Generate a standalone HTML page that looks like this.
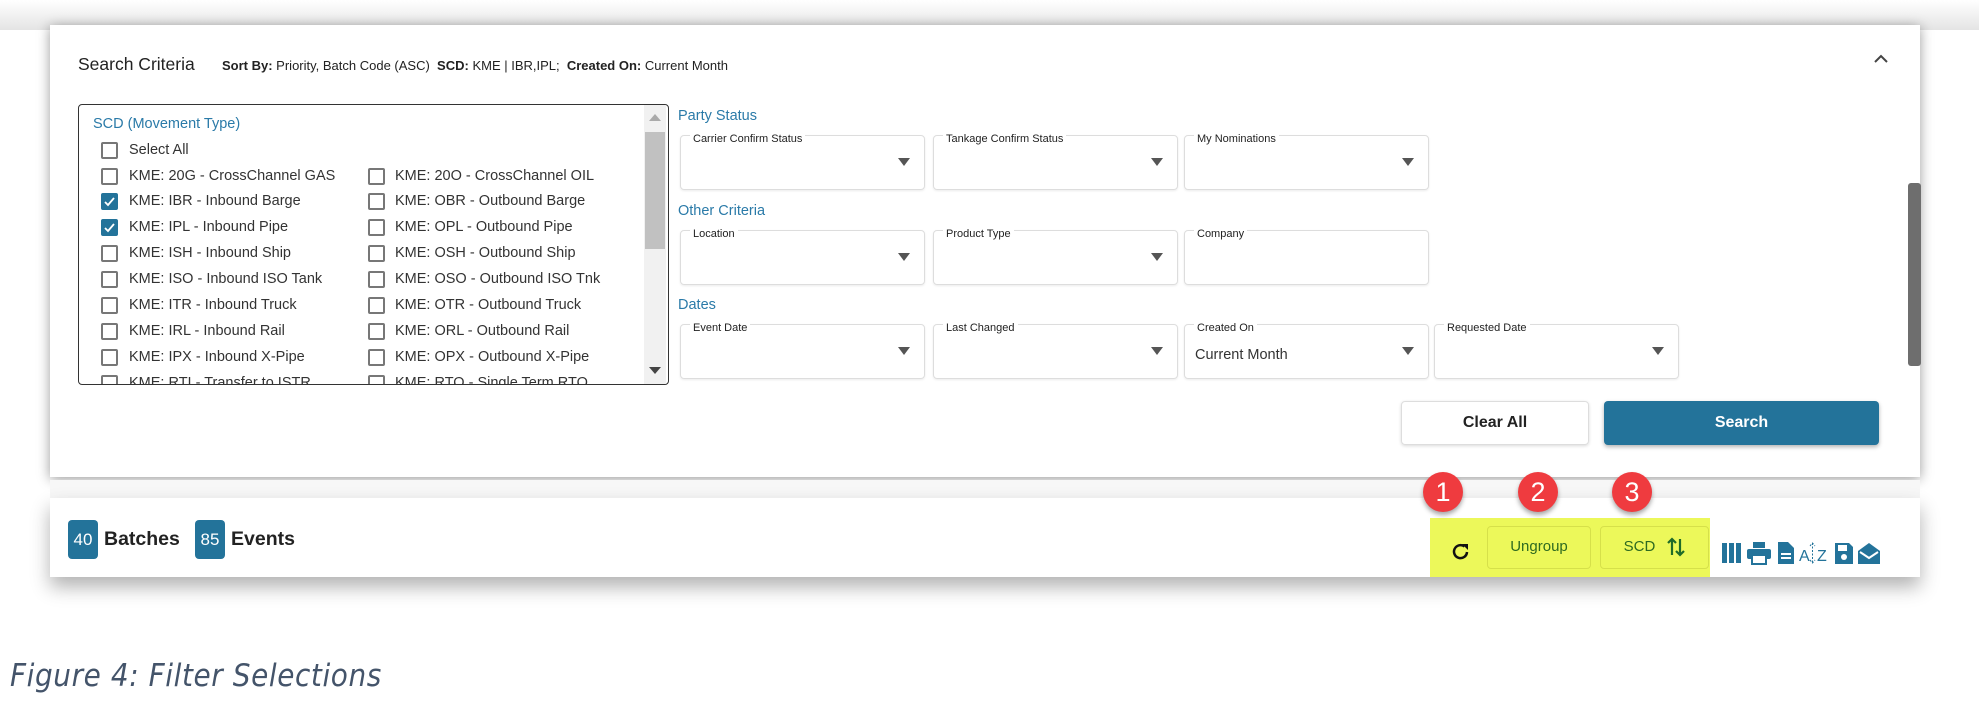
<!DOCTYPE html>
<html><head><meta charset="utf-8"><style>
*{box-sizing:border-box;margin:0;padding:0}
body{width:1979px;height:707px;background:#fff;font-family:"Liberation Sans",Arial,sans-serif;position:relative;overflow:hidden}
.abs{position:absolute}
.topshade{left:0;top:0;width:1979px;height:30px;background:linear-gradient(#fff,#e4e4e4)}
.panel{left:50px;top:25px;width:1870px;height:452px;background:#fff;box-shadow:0 2px 12px rgba(0,0,0,.4)}
.band{left:50px;top:480px;width:1870px;height:18px;background:#f7f7f7}
.bottom{left:50px;top:498px;width:1870px;height:79px;background:#fff;box-shadow:0 10px 18px rgba(0,0,0,.3)}
.t{white-space:nowrap}
.cb{width:17px;height:17px;border:2px solid #777;border-radius:2px;background:#fff}
.cb.on{background:#23739a;border-color:#23739a}
.lbl{font-size:14.5px;color:#333}
.dd{width:245px;height:55px;border:1px solid #ddd;border-radius:4px;box-shadow:0 1px 2px rgba(0,0,0,.08)}
.dd .l{position:absolute;left:9px;top:-3px;font-size:11px;color:#222;background:#fff;padding:0 3px}
.dd .a{position:absolute;right:14px;top:22px;width:0;height:0;border-left:6px solid transparent;border-right:6px solid transparent;border-top:8px solid #555}
.sec{font-size:14.5px;color:#2a7aa8}
.badge{background:#23739a;color:#fff;border-radius:4px;width:30px;height:39px;font-size:17px;line-height:39px;text-align:center}
.red{width:40px;height:40px;border-radius:50%;background:#ef3b3f;color:#fff;font-size:27px;text-align:center;line-height:40px;box-shadow:0 3px 5px rgba(0,0,0,.35)}
.ybtn{border:1px solid #d6e04a;border-radius:4px;color:#2e6a20;font-size:15px;text-align:center}
</style></head><body>
<div class="abs topshade"></div>
<div class="abs panel"></div>
<div class="abs band"></div>
<div class="abs bottom"></div>

<div class="abs t" style="left:78px;top:54px;font-size:17.5px;color:#222">Search Criteria</div>
<div class="abs t" style="left:222px;top:58px;font-size:13px;color:#222"><b>Sort By:</b> Priority, Batch Code (ASC)&nbsp; <b>SCD:</b> KME | IBR,IPL;&nbsp; <b>Created On:</b> Current Month</div>
<svg class="abs" style="left:1873px;top:53px" width="16" height="12"><path d="M2 9 L8 3 L14 9" stroke="#444" stroke-width="2" fill="none"/></svg>

<div class="abs" style="left:78px;top:104px;width:591px;height:281px;border:1.5px solid #333;border-radius:4px;overflow:hidden;background:#fff">
  <div class="abs" style="left:565px;top:0;width:22px;height:281px;background:#f1f1f1"></div>
  <div class="abs" style="left:566px;top:27px;width:20px;height:117px;background:#c1c1c1"></div>
  <div class="abs" style="left:570px;top:9px;width:0;height:0;border-left:6px solid transparent;border-right:6px solid transparent;border-bottom:7px solid #aaa"></div>
  <div class="abs" style="left:570px;top:262px;width:0;height:0;border-left:6px solid transparent;border-right:6px solid transparent;border-top:7px solid #444"></div>
</div>
<div class="abs t sec" style="left:93px;top:116px">SCD (Movement Type)</div>

<div class="abs t sec" style="left:678px;top:108px">Party Status</div>
<div class="abs t sec" style="left:678px;top:203px">Other Criteria</div>
<div class="abs t sec" style="left:678px;top:297px">Dates</div>

<div class="abs dd" style="left:680px;top:135px"><span class="l">Carrier Confirm Status</span><span class="a"></span></div>
<div class="abs dd" style="left:933px;top:135px"><span class="l">Tankage Confirm Status</span><span class="a"></span></div>
<div class="abs dd" style="left:1184px;top:135px"><span class="l">My Nominations</span><span class="a"></span></div>
<div class="abs dd" style="left:680px;top:230px"><span class="l">Location</span><span class="a"></span></div>
<div class="abs dd" style="left:933px;top:230px"><span class="l">Product Type</span><span class="a"></span></div>
<div class="abs dd" style="left:1184px;top:230px"><span class="l">Company</span></div>
<div class="abs dd" style="left:680px;top:324px"><span class="l">Event Date</span><span class="a"></span></div>
<div class="abs dd" style="left:933px;top:324px"><span class="l">Last Changed</span><span class="a"></span></div>
<div class="abs dd" style="left:1184px;top:324px"><span class="l">Created On</span><span class="a"></span><span style="position:absolute;left:10px;top:22px;font-size:14.5px;color:#333">Current Month</span></div>
<div class="abs dd" style="left:1434px;top:324px"><span class="l">Requested Date</span><span class="a"></span></div>

<div class="abs" style="left:1401px;top:401px;width:188px;height:44px;border:1px solid #ddd;border-radius:4px;box-shadow:0 1px 3px rgba(0,0,0,.15);text-align:center;line-height:42px;font-size:16px;font-weight:bold;color:#222">Clear All</div>
<div class="abs" style="left:1604px;top:401px;width:275px;height:44px;background:#23739a;border-radius:4px;box-shadow:0 2px 4px rgba(0,0,0,.3);text-align:center;line-height:44px;font-size:16px;font-weight:bold;color:#fff">Search</div>

<div class="abs" style="left:1908px;top:183px;width:13px;height:183px;background:#6e6e6e;border-radius:3px"></div>

<div class="abs badge" style="left:68px;top:520px">40</div>
<div class="abs t" style="left:104px;top:528px;font-size:19.5px;font-weight:bold;color:#222">Batches</div>
<div class="abs badge" style="left:195px;top:520px">85</div>
<div class="abs t" style="left:231px;top:528px;font-size:19.5px;font-weight:bold;color:#222">Events</div>

<div class="abs" style="left:1430px;top:518px;width:280px;height:59px;background:#ecf85a"></div>
<svg class="abs" style="left:1450px;top:541px" width="22" height="22" viewBox="0 0 22 22"><path d="M17 11 A6.5 6.5 0 1 1 14.5 5.5" stroke="#111" stroke-width="2.5" fill="none"/><path d="M12 3 L18 3 L18 9 Z" fill="#111"/></svg>
<div class="abs ybtn" style="left:1487px;top:526px;width:104px;height:43px;line-height:40px">Ungroup</div>
<div class="abs ybtn" style="left:1600px;top:526px;width:109px;height:43px;line-height:40px;padding-right:30px">SCD</div>
<svg class="abs" style="left:1666px;top:536px" width="20" height="22"><path d="M6 19V3M2 7l4-4 4 4M14 3v16M10 15l4 4 4-4" stroke="#1f6b28" stroke-width="2.2" fill="none"/></svg>

<svg class="abs" style="left:1722px;top:540px" width="176" height="26" viewBox="0 0 176 26">
<g fill="#23739a">
<rect x="0" y="3" width="5" height="20"/><rect x="7" y="3" width="5" height="20"/><rect x="14" y="3" width="5" height="20"/>
<rect x="31" y="2" width="12" height="6"/><rect x="25" y="9" width="24" height="10" rx="2"/><rect x="30" y="15" width="14" height="9" fill="#fff" stroke="#23739a" stroke-width="2"/>
<path d="M56 2h10l6 6v16H56z"/><rect x="59" y="13" width="10" height="2" fill="#fff"/><rect x="59" y="17" width="10" height="2" fill="#fff"/>
<path d="M113 3h14l4 4v17h-18z"/><rect x="116" y="5" width="9" height="6" fill="#fff"/><circle cx="122" cy="17" r="3" fill="#fff"/>
<path d="M136 11l11-8 11 8v13h-22z"/><path d="M138 12l9 6 9-6" stroke="#fff" stroke-width="2" fill="none"/>
</g>
<text x="77" y="21" font-family="Liberation Sans" font-size="16" fill="#23739a">A</text>
<text x="95" y="21" font-family="Liberation Sans" font-size="16" fill="#23739a">Z</text>
<path d="M90.5 3v20M88 6l2.5-3 2.5 3M88 20l2.5 3 2.5-3" stroke="#23739a" stroke-width="1" stroke-dasharray="2 1.5" fill="none"/>
</svg>

<div class="abs red" style="left:1423px;top:472px">1</div>
<div class="abs red" style="left:1518px;top:472px">2</div>
<div class="abs red" style="left:1612px;top:472px">3</div>

<div class="abs t" style="left:10px;top:658px;font-size:31px;letter-spacing:0.6px;font-style:italic;color:#44546a;font-family:'DejaVu Sans Condensed','Liberation Sans',sans-serif">Figure 4: Filter Selections</div>

<div class="abs cb" style="left:101px;top:142px"></div><div class="abs t lbl" style="left:129px;top:142px">Select All</div>
<div class="abs" style="left:78px;top:104px;width:566px;height:280px;overflow:hidden">
<div class="abs" style="left:-78px;top:-104px;width:700px;height:420px">
<div class="abs cb" style="left:101px;top:168px"></div><div class="abs t lbl" style="left:129px;top:168px">KME: 20G - CrossChannel GAS</div>
<div class="abs cb" style="left:368px;top:168px"></div><div class="abs t lbl" style="left:395px;top:168px">KME: 20O - CrossChannel OIL</div>
<div class="abs cb on" style="left:101px;top:193px"><svg width="13" height="13" style="position:absolute;left:0;top:0"><path d="M2 7l3 3 6-7" stroke="#fff" stroke-width="1.8" fill="none"/></svg></div><div class="abs t lbl" style="left:129px;top:193px">KME: IBR - Inbound Barge</div>
<div class="abs cb" style="left:368px;top:193px"></div><div class="abs t lbl" style="left:395px;top:193px">KME: OBR - Outbound Barge</div>
<div class="abs cb on" style="left:101px;top:219px"><svg width="13" height="13" style="position:absolute;left:0;top:0"><path d="M2 7l3 3 6-7" stroke="#fff" stroke-width="1.8" fill="none"/></svg></div><div class="abs t lbl" style="left:129px;top:219px">KME: IPL - Inbound Pipe</div>
<div class="abs cb" style="left:368px;top:219px"></div><div class="abs t lbl" style="left:395px;top:219px">KME: OPL - Outbound Pipe</div>
<div class="abs cb" style="left:101px;top:245px"></div><div class="abs t lbl" style="left:129px;top:245px">KME: ISH - Inbound Ship</div>
<div class="abs cb" style="left:368px;top:245px"></div><div class="abs t lbl" style="left:395px;top:245px">KME: OSH - Outbound Ship</div>
<div class="abs cb" style="left:101px;top:271px"></div><div class="abs t lbl" style="left:129px;top:271px">KME: ISO - Inbound ISO Tank</div>
<div class="abs cb" style="left:368px;top:271px"></div><div class="abs t lbl" style="left:395px;top:271px">KME: OSO - Outbound ISO Tnk</div>
<div class="abs cb" style="left:101px;top:297px"></div><div class="abs t lbl" style="left:129px;top:297px">KME: ITR - Inbound Truck</div>
<div class="abs cb" style="left:368px;top:297px"></div><div class="abs t lbl" style="left:395px;top:297px">KME: OTR - Outbound Truck</div>
<div class="abs cb" style="left:101px;top:323px"></div><div class="abs t lbl" style="left:129px;top:323px">KME: IRL - Inbound Rail</div>
<div class="abs cb" style="left:368px;top:323px"></div><div class="abs t lbl" style="left:395px;top:323px">KME: ORL - Outbound Rail</div>
<div class="abs cb" style="left:101px;top:349px"></div><div class="abs t lbl" style="left:129px;top:349px">KME: IPX - Inbound X-Pipe</div>
<div class="abs cb" style="left:368px;top:349px"></div><div class="abs t lbl" style="left:395px;top:349px">KME: OPX - Outbound X-Pipe</div>
<div class="abs cb" style="left:101px;top:375px"></div><div class="abs t lbl" style="left:129px;top:375px">KME: RTI - Transfer to ISTR</div>
<div class="abs cb" style="left:368px;top:375px"></div><div class="abs t lbl" style="left:395px;top:375px">KME: RTO - Single Term RTO</div>
</div></div>
</body></html>
